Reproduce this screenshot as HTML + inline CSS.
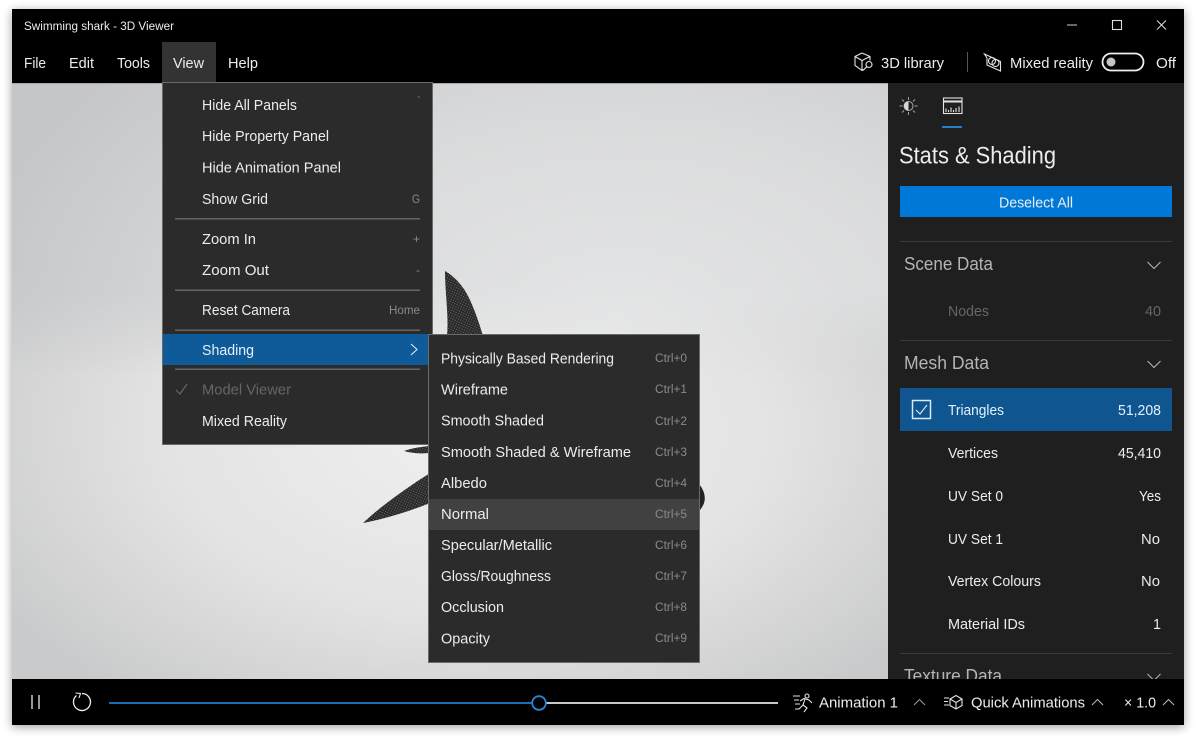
<!DOCTYPE html>
<html><head><meta charset="utf-8"><title>Swimming shark - 3D Viewer</title>
<style>
html,body{margin:0;padding:0;background:#fff;width:1200px;height:738px;overflow:hidden}
svg{display:block}
text{font-family:"Liberation Sans",sans-serif;font-size:15px;fill:#ececec}
.s{font-size:11.5px;fill:#8a8a8a}
.h{font-size:18px;fill:#b4b4b4}
.d{fill:#666}
.i{fill:none;stroke:#e4e4e4;stroke-width:1.1}
</style></head><body>
<svg width="1200" height="738" viewBox="0 0 1200 738" xmlns="http://www.w3.org/2000/svg">
<defs>
<filter id="sh" x="-5%" y="-5%" width="110%" height="110%"><feGaussianBlur stdDeviation="5"/></filter>
<radialGradient id="bgTop" gradientUnits="userSpaceOnUse" cx="620" cy="320" r="660" gradientTransform="translate(0 128) scale(1 .6)">
<stop offset="0" stop-color="#e4e5e6"/><stop offset=".5" stop-color="#dadbdc"/><stop offset="1" stop-color="#c5c6c8"/></radialGradient>
<radialGradient id="bgBot" gradientUnits="userSpaceOnUse" cx="470" cy="430" r="560" gradientTransform="translate(0 172) scale(1 .6)">
<stop offset="0" stop-color="#f0f0f0"/><stop offset=".55" stop-color="#e3e3e3"/><stop offset="1" stop-color="#c9cacb"/></radialGradient>
<linearGradient id="fadeG" x1="0" y1="0" x2="0" y2="1"><stop offset=".72" stop-color="#fff"/><stop offset="1" stop-color="#000"/></linearGradient>
<mask id="fade" maskUnits="userSpaceOnUse" x="12" y="83" width="876" height="290"><rect x="12" y="83" width="876" height="290" fill="url(#fadeG)"/></mask>
<pattern id="mesh" width="2.500" height="2.500" patternUnits="userSpaceOnUse" patternTransform="rotate(25)"><rect width="2.500" height="2.500" fill="#2a2a2a"/><rect width=".8" height=".8" fill="#8f8f8f"/></pattern>
<clipPath id="panel"><rect x="888" y="83" width="296" height="596"/></clipPath>
</defs>

<!-- window -->
<rect x="12" y="11" width="1172" height="716" fill="#000" opacity=".38" filter="url(#sh)"/>
<rect x="12" y="9" width="1172" height="716" fill="#000"/>

<!-- viewport -->
<rect x="12" y="83" width="876" height="596" fill="url(#bgBot)"/>
<rect x="12" y="83" width="876" height="290" fill="url(#bgTop)" mask="url(#fade)"/>
<rect x="12" y="83" width="876" height="1" fill="#a8a8a8"/>

<!-- shark -->
<path d="M445 271C452 275 463 284 470 300C476 313 480 326 483 336L447 336C449 318 445 292 445 271Z" fill="url(#mesh)"/>
<path d="M404 451C412 448 420 447 430 446L430 453C420 454 411 453 404 451Z" fill="url(#mesh)"/>
<path d="M363 523C381 506 405 489 430 473L430 503C408 512 384 519 363 523Z" fill="url(#mesh)"/>
<path d="M699 484C704 490 706 497 704 503C703 506 701 509 699 511Z" fill="#222"/>

<!-- title bar -->
<rect x="162" y="42" width="54" height="41" fill="#333"/>
<text x="24" y="30" style="font-size:11.5px" textLength="150" lengthAdjust="spacingAndGlyphs">Swimming shark - 3D Viewer</text>
<text x="24" y="68" textLength="22" lengthAdjust="spacingAndGlyphs">File</text>
<text x="69" y="68" textLength="25" lengthAdjust="spacingAndGlyphs">Edit</text>
<text x="117" y="68" textLength="33" lengthAdjust="spacingAndGlyphs">Tools</text>
<text x="173" y="68" textLength="31" lengthAdjust="spacingAndGlyphs">View</text>
<text x="228" y="68" textLength="30" lengthAdjust="spacingAndGlyphs">Help</text>

<!-- window controls -->
<path d="M1067 25H1077" stroke="#ccc" stroke-width="1"/>
<rect x="1112.500" y="20.500" width="9" height="9" fill="none" stroke="#ddd" stroke-width="1.100"/>
<path d="M1157 20.500L1166 29.500M1166 20.500L1157 29.500" stroke="#ddd" stroke-width="1"/>

<!-- top right -->
<g class="i">
<path d="M862 53L855 56.500V65.500L862 70.500L863.500 69.500M862 53L870 56.500V60.500M855 56.500L862 60.500L870 56.500M862 60.500V70"/>
<circle cx="869" cy="64.500" r="3"/><path d="M866.800 66.700L863 70.500"/>
</g>
<text x="881" y="68" textLength="63" lengthAdjust="spacingAndGlyphs">3D library</text>
<rect x="967" y="52" width="1" height="20" fill="#555"/>
<g class="i">
<path d="M984.500 54L1000.500 61.500V71L987 65V58L984.500 54Z"/>
<circle cx="992" cy="61" r="3.500"/><circle cx="995.500" cy="63" r="3.500"/>
</g>
<text x="1010" y="68" textLength="83" lengthAdjust="spacingAndGlyphs">Mixed reality</text>
<rect x="1102.500" y="53.500" width="41" height="17" rx="8.500" fill="none" stroke="#eee" stroke-width="1.800"/>
<circle cx="1111" cy="62" r="4.500" fill="#c4c4c4"/>
<text x="1156" y="68" textLength="20" lengthAdjust="spacingAndGlyphs">Off</text>

<!-- right panel -->
<rect x="888" y="83" width="296" height="596" fill="#1f1f1f"/>
<circle cx="908.500" cy="106" r="4.500" fill="none" stroke="#aaa"/>
<path d="M908.500 101.500A4.500 4.500 0 0 0 908.500 110.500Z" fill="#d8d8d8"/>
<path d="M908.500 97V100M908.500 112V115M899.500 106H902.500M914.500 106H917.500M902 99.500L904 101.500M913 110.500L915 112.500M915 99.500L913 101.500M904 110.500L902 112.500" fill="none" stroke="#a0a0a0"/>
<rect x="943.500" y="98" width="18.500" height="15.500" fill="none" stroke="#e4e4e4" stroke-width="1.100"/>
<rect x="943.500" y="100.500" width="18.500" height="2" fill="#e4e4e4"/>
<path d="M946 112V108.500M948.500 112V110M951 112V107.500M953.500 112V110M956 112V108M959 112V106.500" stroke="#e4e4e4" stroke-width="1.100"/>
<rect x="942" y="126" width="20" height="2" fill="#2b7fc4"/>
<text x="899" y="163.500" style="font-size:24px" textLength="157" lengthAdjust="spacingAndGlyphs">Stats &amp; Shading</text>
<rect x="900" y="186" width="272" height="31" fill="#0078d7"/>
<text x="999" y="207.500" textLength="74" lengthAdjust="spacingAndGlyphs">Deselect All</text>

<rect x="900" y="241" width="272" height="1" fill="#3a3a3a"/>
<text class="h" x="904" y="270" textLength="89" lengthAdjust="spacingAndGlyphs">Scene Data</text>
<path d="M1147.500 262L1154 268.500L1160.500 262" fill="none" stroke="#b8b8b8"/>
<text class="d" x="948" y="316" textLength="41" lengthAdjust="spacingAndGlyphs">Nodes</text>
<text class="d" x="1145" y="316" textLength="16" lengthAdjust="spacingAndGlyphs">40</text>
<rect x="900" y="340" width="272" height="1" fill="#3a3a3a"/>
<text class="h" x="904" y="369" textLength="85" lengthAdjust="spacingAndGlyphs">Mesh Data</text>
<path d="M1147.500 361L1154 367.500L1160.500 361" fill="none" stroke="#b8b8b8"/>

<rect x="900" y="388" width="272" height="43" fill="#0f5590"/>
<rect x="912.500" y="400.500" width="18" height="18" fill="none" stroke="#d8ecfa" stroke-width="1.500"/>
<path d="M916 410L920 414L927 405" fill="none" stroke="#d8ecfa" stroke-width="1.100"/>
<text x="948" y="415" style="fill:#e4f1fb" textLength="56" lengthAdjust="spacingAndGlyphs">Triangles</text>
<text x="1118" y="415" style="fill:#e4f1fb" textLength="43" lengthAdjust="spacingAndGlyphs">51,208</text>
<text x="948" y="458" textLength="50" lengthAdjust="spacingAndGlyphs">Vertices</text>
<text x="1118" y="458" textLength="43" lengthAdjust="spacingAndGlyphs">45,410</text>
<text x="948" y="501" textLength="55" lengthAdjust="spacingAndGlyphs">UV Set 0</text>
<text x="1139" y="501" textLength="22" lengthAdjust="spacingAndGlyphs">Yes</text>
<text x="948" y="544" textLength="55" lengthAdjust="spacingAndGlyphs">UV Set 1</text>
<text x="1141" y="544" textLength="19" lengthAdjust="spacingAndGlyphs">No</text>
<text x="948" y="586" textLength="93" lengthAdjust="spacingAndGlyphs">Vertex Colours</text>
<text x="1141" y="586" textLength="19" lengthAdjust="spacingAndGlyphs">No</text>
<text x="948" y="629" textLength="77" lengthAdjust="spacingAndGlyphs">Material IDs</text>
<text x="1153" y="629" textLength="8" lengthAdjust="spacingAndGlyphs">1</text>
<rect x="900" y="653" width="272" height="1" fill="#3a3a3a"/>
<g clip-path="url(#panel)">
<text class="h" x="904" y="682" textLength="98" lengthAdjust="spacingAndGlyphs">Texture Data</text>
<path d="M1147.500 674L1154 680.500L1160.500 674" fill="none" stroke="#b8b8b8"/>
</g>

<!-- view menu -->
<rect x="162.500" y="82.500" width="270" height="362" fill="#2b2b2b" stroke="#6a6a6a"/>
<rect x="163" y="334" width="269" height="31" fill="#0f5a99"/>
<g fill="#656565">
<rect x="175" y="218" width="245" height="1.500"/><rect x="175" y="289.500" width="245" height="1.500"/>
<rect x="175" y="329.500" width="245" height="1.500"/><rect x="175" y="368.500" width="245" height="1.500"/>
</g>
<text x="202" y="110" textLength="95" lengthAdjust="spacingAndGlyphs">Hide All Panels</text>
<text x="202" y="141" textLength="127" lengthAdjust="spacingAndGlyphs">Hide Property Panel</text>
<text x="202" y="172.500" textLength="139" lengthAdjust="spacingAndGlyphs">Hide Animation Panel</text>
<text x="202" y="204" textLength="66" lengthAdjust="spacingAndGlyphs">Show Grid</text>
<text x="202" y="244" textLength="54" lengthAdjust="spacingAndGlyphs">Zoom In</text>
<text x="202" y="275" textLength="67" lengthAdjust="spacingAndGlyphs">Zoom Out</text>
<text x="202" y="315" textLength="88" lengthAdjust="spacingAndGlyphs">Reset Camera</text>
<text x="202" y="355" style="fill:#e4f1fb" textLength="52" lengthAdjust="spacingAndGlyphs">Shading</text>
<text x="202" y="394.500" class="d" textLength="89" lengthAdjust="spacingAndGlyphs">Model Viewer</text>
<text x="202" y="426" textLength="85" lengthAdjust="spacingAndGlyphs">Mixed Reality</text>
<text class="s" x="417" y="105">`</text>
<text class="s" x="412" y="203" textLength="8" lengthAdjust="spacingAndGlyphs">G</text>
<text class="s" x="413" y="243" textLength="7" lengthAdjust="spacingAndGlyphs">+</text>
<text class="s" x="416" y="274" textLength="4" lengthAdjust="spacingAndGlyphs">-</text>
<text class="s" x="389" y="314" textLength="31" lengthAdjust="spacingAndGlyphs">Home</text>
<path d="M411 344L417 349.500L411 355" fill="none" stroke="#dcecf8" stroke-width="1.100"/>
<path d="M176 390L180 394L187 384" fill="none" stroke="#6a6a6a" stroke-width="1.100"/>

<!-- shading submenu -->
<rect x="428.500" y="334.500" width="271" height="328" fill="#2b2b2b" stroke="#6a6a6a"/>
<rect x="429" y="499" width="270" height="31" fill="#414141"/>
<text x="441" y="363.500" textLength="173" lengthAdjust="spacingAndGlyphs">Physically Based Rendering</text>
<text x="441" y="394.500" textLength="67" lengthAdjust="spacingAndGlyphs">Wireframe</text>
<text x="441" y="425.500" textLength="103" lengthAdjust="spacingAndGlyphs">Smooth Shaded</text>
<text x="441" y="457" textLength="190" lengthAdjust="spacingAndGlyphs">Smooth Shaded &amp; Wireframe</text>
<text x="441" y="488" textLength="46" lengthAdjust="spacingAndGlyphs">Albedo</text>
<text x="441" y="519" textLength="48" lengthAdjust="spacingAndGlyphs">Normal</text>
<text x="441" y="550" textLength="111" lengthAdjust="spacingAndGlyphs">Specular/Metallic</text>
<text x="441" y="581" textLength="110" lengthAdjust="spacingAndGlyphs">Gloss/Roughness</text>
<text x="441" y="612" textLength="63" lengthAdjust="spacingAndGlyphs">Occlusion</text>
<text x="441" y="643.500" textLength="49" lengthAdjust="spacingAndGlyphs">Opacity</text>
<text class="s" x="655" y="362" textLength="32" lengthAdjust="spacingAndGlyphs">Ctrl+0</text>
<text class="s" x="655" y="393" textLength="32" lengthAdjust="spacingAndGlyphs">Ctrl+1</text>
<text class="s" x="655" y="425" textLength="32" lengthAdjust="spacingAndGlyphs">Ctrl+2</text>
<text class="s" x="655" y="456" textLength="32" lengthAdjust="spacingAndGlyphs">Ctrl+3</text>
<text class="s" x="655" y="487" textLength="32" lengthAdjust="spacingAndGlyphs">Ctrl+4</text>
<text class="s" x="655" y="518" textLength="32" lengthAdjust="spacingAndGlyphs">Ctrl+5</text>
<text class="s" x="655" y="549" textLength="32" lengthAdjust="spacingAndGlyphs">Ctrl+6</text>
<text class="s" x="655" y="580" textLength="32" lengthAdjust="spacingAndGlyphs">Ctrl+7</text>
<text class="s" x="655" y="611" textLength="32" lengthAdjust="spacingAndGlyphs">Ctrl+8</text>
<text class="s" x="655" y="642" textLength="32" lengthAdjust="spacingAndGlyphs">Ctrl+9</text>

<!-- bottom bar -->
<rect x="12" y="679" width="1172" height="46" fill="#000"/>
<path d="M32 695V709M39 695V709" stroke="#e8e8e8" stroke-width="1.300"/>
<path d="M76.500 695.500A8.500 8.500 0 1 0 82 693.500" fill="none" stroke="#eee" stroke-width="1.300"/>
<path d="M75.500 693L80.500 693.500L79 698" fill="none" stroke="#eee" stroke-width="1.100"/>
<rect x="109" y="702" width="430" height="2" fill="#1f6cb4"/>
<rect x="539" y="702" width="239" height="2" fill="#c8c8c8"/>
<circle cx="539" cy="703" r="6.800" fill="#000" stroke="#2a86d4" stroke-width="1.800"/>

<g class="i" stroke-width="1">
<path d="M793 696H800M794 700H799M795 704H800"/>
<circle cx="807" cy="696" r="2"/>
<path d="M800 701L804 698.500L809 700L812 703M805 699L803 705L807 708L804 712M803 705L799 709H795"/>
</g>
<text x="819" y="707.500" textLength="79" lengthAdjust="spacingAndGlyphs">Animation 1</text>
<path d="M914 705L919.500 699.500L925 705" fill="none" stroke="#999"/>
<g class="i" stroke-width="1">
<path d="M944 698H949M944 701.500H948M944 705H949"/>
<path d="M950 699L956 695.500L962 699V705.500L956 709L950 705.500ZM950 699L956 702.500L962 699M956 702.500V709"/>
</g>
<text x="971" y="707.500" textLength="114" lengthAdjust="spacingAndGlyphs">Quick Animations</text>
<path d="M1092 705L1097.500 699.500L1103 705" fill="none" stroke="#bbb"/>
<text x="1124" y="707.500" textLength="32" lengthAdjust="spacingAndGlyphs">× 1.0</text>
<path d="M1163 705L1168.500 699.500L1174 705" fill="none" stroke="#bbb"/>
</svg>
</body></html>
